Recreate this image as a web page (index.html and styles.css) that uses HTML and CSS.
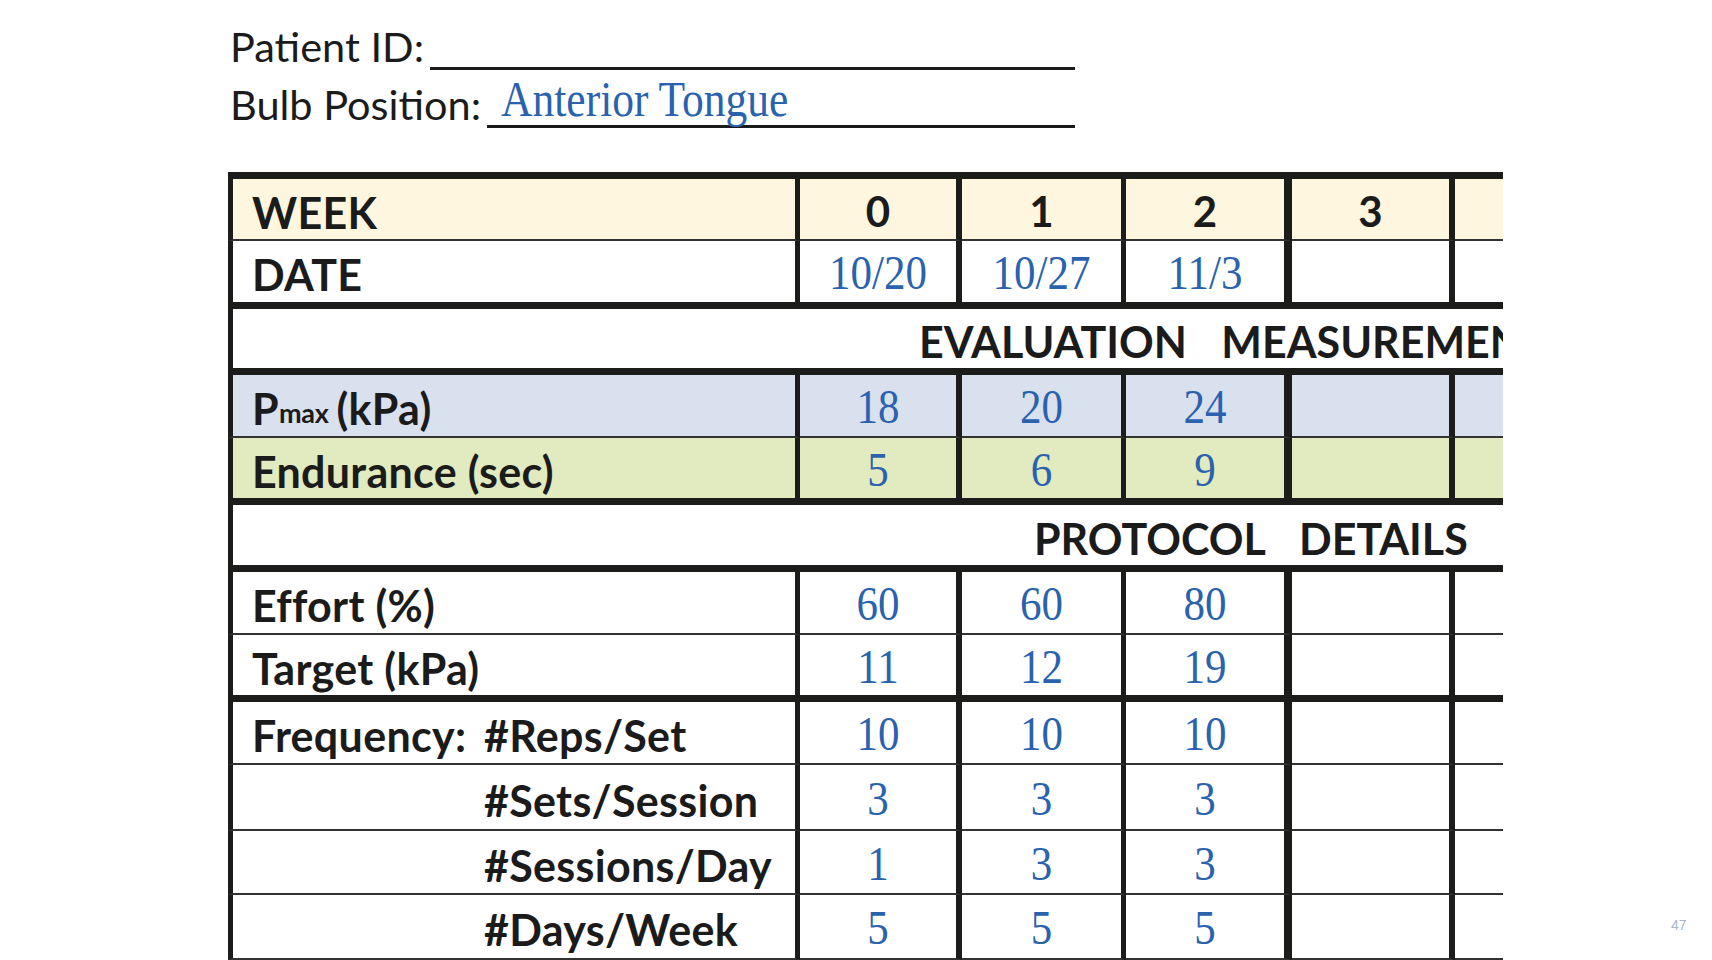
FILE: index.html
```html
<!DOCTYPE html>
<html lang="en">
<head>
<meta charset="utf-8">
<title>Patient Log</title>
<link rel="stylesheet" href="styles.css">
</head>
<body>
<div class="slide">
  <div class="fields">
    <div class="field-line">
      <span class="field-label">Patient ID:</span>
      <span class="field-value pid"></span>
    </div>
    <div class="field-line">
      <span class="field-label">Bulb Position:</span>
      <span class="field-value bulb"><span class="hand">Anterior Tongue</span></span>
    </div>
  </div>

  <div class="table-clip">
    <div class="grid">
      <div class="row cream thin">
        <div class="lbl">WEEK</div>
        <div class="val-cell"><span class="wk">0</span></div>
        <div class="val-cell"><span class="wk">1</span></div>
        <div class="val-cell"><span class="wk">2</span></div>
        <div class="val-cell"><span class="wk">3</span></div>
        <div class="val-cell"></div>
      </div>
      <div class="row thick">
        <div class="lbl">DATE</div>
        <div class="val-cell"><span class="val">10/20</span></div>
        <div class="val-cell"><span class="val">10/27</span></div>
        <div class="val-cell"><span class="val">11/3</span></div>
        <div class="val-cell"></div>
        <div class="val-cell"></div>
      </div>
      <div class="row thick">
        <div class="section eval">EVALUATION MEASUREMENTS</div>
      </div>
      <div class="row blue thin">
        <div class="lbl">P<span class="sub">max</span>(kPa)</div>
        <div class="val-cell"><span class="val">18</span></div>
        <div class="val-cell"><span class="val">20</span></div>
        <div class="val-cell"><span class="val">24</span></div>
        <div class="val-cell"></div>
        <div class="val-cell"></div>
      </div>
      <div class="row green thick">
        <div class="lbl">Endurance (sec)</div>
        <div class="val-cell"><span class="val">5</span></div>
        <div class="val-cell"><span class="val">6</span></div>
        <div class="val-cell"><span class="val">9</span></div>
        <div class="val-cell"></div>
        <div class="val-cell"></div>
      </div>
      <div class="row thick">
        <div class="section prot">PROTOCOL DETAILS</div>
      </div>
      <div class="row thin">
        <div class="lbl">Effort (%)</div>
        <div class="val-cell"><span class="val">60</span></div>
        <div class="val-cell"><span class="val">60</span></div>
        <div class="val-cell"><span class="val">80</span></div>
        <div class="val-cell"></div>
        <div class="val-cell"></div>
      </div>
      <div class="row thick">
        <div class="lbl">Target (kPa)</div>
        <div class="val-cell"><span class="val">11</span></div>
        <div class="val-cell"><span class="val">12</span></div>
        <div class="val-cell"><span class="val">19</span></div>
        <div class="val-cell"></div>
        <div class="val-cell"></div>
      </div>
      <div class="row thin">
        <div class="lbl"><span class="freq">Frequency:</span>#Reps/Set</div>
        <div class="val-cell"><span class="val">10</span></div>
        <div class="val-cell"><span class="val">10</span></div>
        <div class="val-cell"><span class="val">10</span></div>
        <div class="val-cell"></div>
        <div class="val-cell"></div>
      </div>
      <div class="row thin">
        <div class="lbl indent">#Sets/Session</div>
        <div class="val-cell"><span class="val">3</span></div>
        <div class="val-cell"><span class="val">3</span></div>
        <div class="val-cell"><span class="val">3</span></div>
        <div class="val-cell"></div>
        <div class="val-cell"></div>
      </div>
      <div class="row thin">
        <div class="lbl indent">#Sessions/Day</div>
        <div class="val-cell"><span class="val">1</span></div>
        <div class="val-cell"><span class="val">3</span></div>
        <div class="val-cell"><span class="val">3</span></div>
        <div class="val-cell"></div>
        <div class="val-cell"></div>
      </div>
      <div class="row thin">
        <div class="lbl indent">#Days/Week</div>
        <div class="val-cell"><span class="val">5</span></div>
        <div class="val-cell"><span class="val">5</span></div>
        <div class="val-cell"><span class="val">5</span></div>
        <div class="val-cell"></div>
        <div class="val-cell"></div>
      </div>
    </div>
  </div>

  <div class="page-num">47</div>
</div>
</body>
</html>
```

FILE: styles.css
```css
* { box-sizing: border-box; }

html, body {
  margin: 0;
  padding: 0;
  background: #ffffff;
}

.slide {
  position: relative;
  width: 1712px;
  height: 960px;
  overflow: hidden;
  padding-left: 228px;
  padding-top: 22px;
  font-family: "Lato", "Liberation Sans", sans-serif;
  color: #1b1b1b;
}

/* ---- header fields ---- */
.fields {
  width: 847px;
  display: flex;
  flex-direction: column;
  gap: 10px;
  padding-left: 2px;
}

.field-line {
  display: flex;
  align-items: flex-end;
  height: 48px;
}

.field-label {
  font-size: 41.5px;
  line-height: 48px;
  white-space: nowrap;
}

.field-value {
  flex: 1;
  height: 48px;
  border-bottom: 3px solid #1b1b1b;
  margin-left: 6px;
}

.field-value.bulb {
  padding-left: 14px;
  line-height: 38px;
}

.hand {
  display: inline-block;
  font-family: "Liberation Serif", "Times New Roman", serif;
  font-size: 43.5px;
  color: #2a62ad;
  transform: scaleY(1.15);
}

/* ---- table ---- */
.table-clip {
  margin-top: 44px;
  width: 1275px;
  overflow: hidden;
}

.grid {
  display: grid;
  width: 1388px;
  grid-template-columns: 572px 162px 164px 166px 163px 161px;
  grid-template-rows: 62px 68px 66px 63px 67px 67px 63px 67px 63px 66px 64px 65px;
  border-top: 7px solid #1c1c1a;
}

.row { display: contents; }

.row > div {
  border-right: 5px solid #1c1c1a;
  border-bottom: 2px solid #333;
  display: flex;
  align-items: center;
}

.row > div:nth-child(1) { border-left: 5px solid #1c1c1a; }
.row > div:nth-child(2) { border-right-width: 6px; }
.row > div:nth-child(3) { border-right-width: 5px; }
.row > div:nth-child(4) { border-right-width: 8px; }
.row > div:nth-child(5) { border-right-width: 6px; }
.row > div:nth-child(6) { border-right-width: 6px; }

.row.thick > div { border-bottom: 7px solid #1c1c1a; }

.row.cream > div { background: #fef6de; }
.row.blue > div { background: #d9e1ee; }
.row.green > div { background: #e2eabf; }

.lbl {
  padding-left: 19px;
  padding-top: 6px;
  font-size: 43px;
  font-weight: 700;
  white-space: nowrap;
  letter-spacing: 0.3px;
}

.lbl .sub {
  font-size: 27px;
  font-weight: 700;
  letter-spacing: -0.3px;
  margin-right: 8px;
  position: relative;
  top: 4px;
}

.lbl .freq {
  display: inline-block;
  width: 232px;
}

.lbl.indent { padding-left: 251px; }

.val-cell {
  justify-content: center;
  padding-top: 2px;
}

.wk {
  font-size: 42px;
  font-weight: 700;
  position: relative;
  top: 1px;
}

.val {
  display: inline-block;
  font-family: "Liberation Serif", "Times New Roman", serif;
  font-size: 43px;
  color: #2a62ad;
  transform: scaleY(1.13);
}

.section {
  grid-column: 1 / -1;
  font-size: 43px;
  font-weight: 700;
  word-spacing: 24px;
  white-space: nowrap;
  padding-top: 6px;
}

.section.eval { padding-left: 686px; }
.section.prot { padding-left: 801px; }

.page-num {
  position: absolute;
  left: 1671px;
  top: 917px;
  font-family: "Liberation Sans", sans-serif;
  font-size: 14px;
  color: #aab4cc;
}
```
